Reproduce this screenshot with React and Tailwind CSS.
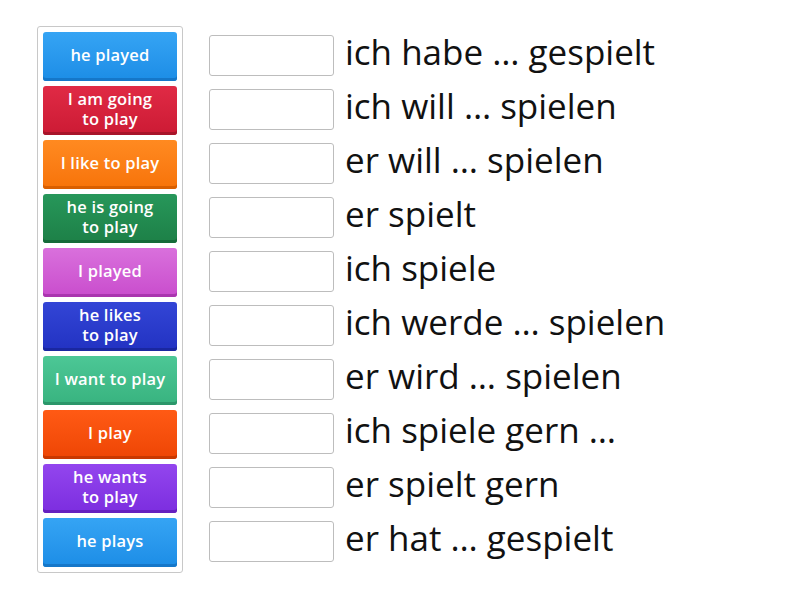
import React from 'react';

const tiles = [
  { label: ['he played'], cls: 'from-[#35a4f4] to-[#1c8de6] shadow-[inset_0_-3px_0_#1577c9]' },
  { label: ['I am going', 'to play'], cls: 'from-[#e02a45] to-[#cc1a34] shadow-[inset_0_-3px_0_#a8142a]' },
  { label: ['I like to play'], cls: 'from-[#ff8a20] to-[#f77308] shadow-[inset_0_-3px_0_#d95f00]' },
  { label: ['he is going', 'to play'], cls: 'from-[#27975a] to-[#1d8047] shadow-[inset_0_-3px_0_#156a39]' },
  { label: ['I played'], cls: 'from-[#d970dc] to-[#c94ccd] shadow-[inset_0_-3px_0_#aa35af]' },
  { label: ['he likes', 'to play'], cls: 'from-[#3345d6] to-[#2232c2] shadow-[inset_0_-3px_0_#1a27a0]' },
  { label: ['I want to play'], cls: 'from-[#4cc796] to-[#38b37f] shadow-[inset_0_-3px_0_#2b966a]' },
  { label: ['I play'], cls: 'from-[#ff5a14] to-[#ee4504] shadow-[inset_0_-3px_0_#c93800]' },
  { label: ['he wants', 'to play'], cls: 'from-[#9345ee] to-[#7c2ddf] shadow-[inset_0_-3px_0_#6520bf]' },
  { label: ['he plays'], cls: 'from-[#35a4f4] to-[#1c8de6] shadow-[inset_0_-3px_0_#1577c9]' },
];

const prompts = [
  'ich habe … gespielt',
  'ich will … spielen',
  'er will … spielen',
  'er spielt',
  'ich spiele',
  'ich werde … spielen',
  'er wird … spielen',
  'ich spiele gern …',
  'er spielt gern',
  'er hat … gespielt',
];

export default function App() {
  return (
    <div className="w-[800px] h-[600px] bg-white font-['Open_Sans',sans-serif] flex items-start pt-[26px] pl-[37px]">
      {/* ── Tiles ── */}
      <div className="w-[146px] border border-[#c8c8c8] rounded-[3px] p-[5px] flex flex-col gap-[5px]">
        {tiles.map((t, i) => (
          <div
            key={i}
            className={`h-[49px] pb-[3px] rounded-[3px] bg-linear-to-b ${t.cls} flex flex-col items-center justify-center text-white text-[16.5px] leading-[20px] font-semibold tracking-[0.2px]`}
          >
            {t.label.map(l => <div key={l}>{l}</div>)}
          </div>
        ))}
      </div>

      {/* ── Targets ── */}
      <div className="ml-[26px] pt-[5px] flex flex-col">
        {prompts.map(p => (
          <div key={p} className="h-[54px] flex items-start">
            <div className="mt-[4px] w-[125px] h-[41px] border border-[#bdbdbd] rounded-[3px] bg-white" />
            <div className="ml-[11px] text-[35px] leading-[44px] -mt-[1px] text-[#111]">{p}</div>
          </div>
        ))}
      </div>
    </div>
  );
}
